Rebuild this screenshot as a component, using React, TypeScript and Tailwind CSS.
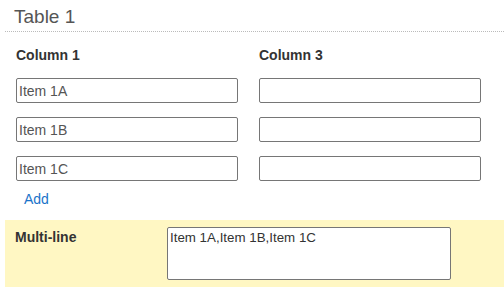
import { useState } from "react";

const rows = [
    { left: "Item 1A", right: "" },
    { left: "Item 1B", right: "" },
    { left: "Item 1C", right: "" },
];

export default function App() {
    const [items] = useState(rows);
    const joined = items.map((r) => r.left).join(",");

    return (
        <div className="w-[504px] h-[291px] bg-white overflow-hidden font-['Liberation_Sans',Arial,sans-serif]">
            <div className="ml-[5px]">
                {/* title */}
                <div className="pl-[9px] pt-[6px] pb-[3px] border-b border-dotted border-[#bbbbbb]">
                    <h1 className="text-[19px] leading-[22px] text-[#555555]">Table 1</h1>
                </div>

                {/* column table */}
                <div className="pl-[11px] pt-[15px]">
                    <div className="grid grid-cols-[222px_222px] gap-x-[21px]">
                        <div className="text-[14px] leading-[16px] font-bold text-[#333333]">Column 1</div>
                        <div className="text-[14px] leading-[16px] font-bold text-[#333333]">Column 3</div>
                    </div>
                    <div className="flex flex-col gap-[14px] mt-[15px]">
                        {items.map((r, i) => (
                            <div key={i} className="grid grid-cols-[222px_222px] gap-x-[21px]">
                                <input
                                    defaultValue={r.left}
                                    className="h-[25px] w-[222px] border border-[#767676] rounded-[2px] px-[2px] text-[14px] text-[#555555] bg-white outline-none"
                                />
                                <input
                                    defaultValue={r.right}
                                    className="h-[25px] w-[222px] border border-[#767676] rounded-[2px] px-[2px] text-[14px] text-[#555555] bg-white outline-none"
                                />
                            </div>
                        ))}
                    </div>
                    <div className="mt-[10px] pl-[8px] text-[14px] leading-[16px]">
                        <a className="text-[#1a73c9] cursor-pointer">Add</a>
                    </div>
                </div>

                {/* multi-line */}
                <div className="mt-[13px] bg-[#fff7c3] flex items-start pl-[10px] pt-[7px] pb-[7px]">
                    <div className="w-[152px] pt-[2px] text-[14px] leading-[16px] font-bold text-[#333333]">Multi-line</div>
                    <textarea
                        readOnly
                        value={joined}
                        className="block w-[284px] h-[53px] border border-[#767676] rounded-[2px] p-[2px] text-[13.33px] leading-[15px] text-[#333333] bg-white resize-none outline-none"
                    />
                </div>
            </div>
        </div>
    );
}
